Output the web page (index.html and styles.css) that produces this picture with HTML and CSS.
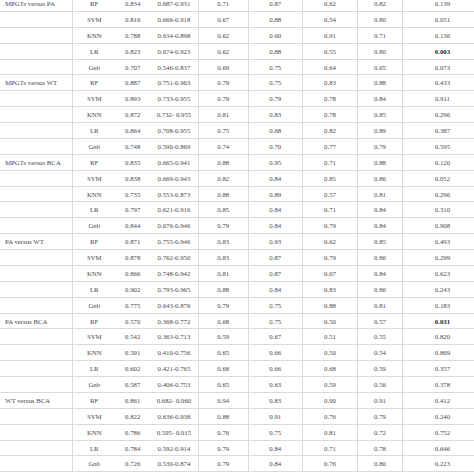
FILE: index.html
```html
<!DOCTYPE html>
<html>
<head>
<meta charset="utf-8">
<link rel="stylesheet" href="styles.css">
</head>
<body>
<div class="table">
  <div class="row"><div class="c g">MPGTs versus PA</div><div class="c m">RF</div><div class="c a">0.834</div><div class="c ci">0.687-0.931</div><div class="c v">0.71</div><div class="c v">0.87</div><div class="c v">0.62</div><div class="c v">0.82</div><div class="c p">0.139</div></div>
  <div class="row"><div class="c g"></div><div class="c m">SVM</div><div class="c a">0.816</div><div class="c ci">0.666-0.918</div><div class="c v">0.67</div><div class="c v">0.88</div><div class="c v">0.54</div><div class="c v">0.80</div><div class="c p">0.051</div></div>
  <div class="row"><div class="c g"></div><div class="c m">KNN</div><div class="c a">0.788</div><div class="c ci">0.634-0.898</div><div class="c v">0.62</div><div class="c v">0.60</div><div class="c v">0.91</div><div class="c v">0.71</div><div class="c p">0.136</div></div>
  <div class="row"><div class="c g"></div><div class="c m">LR</div><div class="c a">0.823</div><div class="c ci">0.674-0.923</div><div class="c v">0.62</div><div class="c v">0.88</div><div class="c v">0.55</div><div class="c v">0.80</div><div class="c p b">0.003</div></div>
  <div class="row"><div class="c g"></div><div class="c m">Gnb</div><div class="c a">0.707</div><div class="c ci">0.546-0.837</div><div class="c v">0.69</div><div class="c v">0.75</div><div class="c v">0.64</div><div class="c v">0.65</div><div class="c p">0.073</div></div>

  <div class="row"><div class="c g">MPGTs versus WT</div><div class="c m">RF</div><div class="c a">0.887</div><div class="c ci">0.751-0.963</div><div class="c v">0.79</div><div class="c v">0.75</div><div class="c v">0.83</div><div class="c v">0.88</div><div class="c p">0.433</div></div>
  <div class="row"><div class="c g"></div><div class="c m">SVM</div><div class="c a">0.893</div><div class="c ci">0.733-0.955</div><div class="c v">0.79</div><div class="c v">0.79</div><div class="c v">0.78</div><div class="c v">0.84</div><div class="c p">0.911</div></div>
  <div class="row"><div class="c g"></div><div class="c m">KNN</div><div class="c a">0.872</div><div class="c ci">0.732- 0.955</div><div class="c v">0.81</div><div class="c v">0.83</div><div class="c v">0.78</div><div class="c v">0.85</div><div class="c p">0.296</div></div>
  <div class="row"><div class="c g"></div><div class="c m">LR</div><div class="c a">0.864</div><div class="c ci">0.708-0.955</div><div class="c v">0.75</div><div class="c v">0.68</div><div class="c v">0.82</div><div class="c v">0.89</div><div class="c p">0.387</div></div>
  <div class="row"><div class="c g"></div><div class="c m">Gnb</div><div class="c a">0.748</div><div class="c ci">0.590-0.869</div><div class="c v">0.74</div><div class="c v">0.70</div><div class="c v">0.77</div><div class="c v">0.79</div><div class="c p">0.595</div></div>

  <div class="row"><div class="c g">MPGTs versus BCA</div><div class="c m">RF</div><div class="c a">0.835</div><div class="c ci">0.665-0.941</div><div class="c v">0.88</div><div class="c v">0.95</div><div class="c v">0.71</div><div class="c v">0.88</div><div class="c p">0.120</div></div>
  <div class="row"><div class="c g"></div><div class="c m">SVM</div><div class="c a">0.838</div><div class="c ci">0.669-0.943</div><div class="c v">0.82</div><div class="c v">0.84</div><div class="c v">0.85</div><div class="c v">0.86</div><div class="c p">0.052</div></div>
  <div class="row"><div class="c g"></div><div class="c m">KNN</div><div class="c a">0.735</div><div class="c ci">0.553-0.873</div><div class="c v">0.88</div><div class="c v">0.89</div><div class="c v">0.57</div><div class="c v">0.81</div><div class="c p">0.296</div></div>
  <div class="row"><div class="c g"></div><div class="c m">LR</div><div class="c a">0.797</div><div class="c ci">0.621-0.916</div><div class="c v">0.85</div><div class="c v">0.84</div><div class="c v">0.71</div><div class="c v">0.84</div><div class="c p">0.310</div></div>
  <div class="row"><div class="c g"></div><div class="c m">Gnb</div><div class="c a">0.844</div><div class="c ci">0.676-0.946</div><div class="c v">0.79</div><div class="c v">0.84</div><div class="c v">0.79</div><div class="c v">0.84</div><div class="c p">0.908</div></div>

  <div class="row"><div class="c g">PA versus WT</div><div class="c m">RF</div><div class="c a">0.871</div><div class="c ci">0.755-0.946</div><div class="c v">0.83</div><div class="c v">0.93</div><div class="c v">0.62</div><div class="c v">0.85</div><div class="c p">0.493</div></div>
  <div class="row"><div class="c g"></div><div class="c m">SVM</div><div class="c a">0.878</div><div class="c ci">0.762-0.950</div><div class="c v">0.83</div><div class="c v">0.87</div><div class="c v">0.79</div><div class="c v">0.86</div><div class="c p">0.299</div></div>
  <div class="row"><div class="c g"></div><div class="c m">KNN</div><div class="c a">0.866</div><div class="c ci">0.748-0.942</div><div class="c v">0.81</div><div class="c v">0.87</div><div class="c v">0.67</div><div class="c v">0.84</div><div class="c p">0.623</div></div>
  <div class="row"><div class="c g"></div><div class="c m">LR</div><div class="c a">0.902</div><div class="c ci">0.793-0.965</div><div class="c v">0.88</div><div class="c v">0.84</div><div class="c v">0.83</div><div class="c v">0.86</div><div class="c p">0.243</div></div>
  <div class="row"><div class="c g"></div><div class="c m">Gnb</div><div class="c a">0.775</div><div class="c ci">0.643-0.876</div><div class="c v">0.79</div><div class="c v">0.75</div><div class="c v">0.88</div><div class="c v">0.81</div><div class="c p">0.183</div></div>

  <div class="row"><div class="c g">PA versus BCA</div><div class="c m">RF</div><div class="c a">0.570</div><div class="c ci">0.368-0.772</div><div class="c v">0.68</div><div class="c v">0.75</div><div class="c v">0.50</div><div class="c v">0.57</div><div class="c p b">0.031</div></div>
  <div class="row"><div class="c g"></div><div class="c m">SVM</div><div class="c a">0.542</div><div class="c ci">0.363-0.713</div><div class="c v">0.59</div><div class="c v">0.67</div><div class="c v">0.51</div><div class="c v">0.55</div><div class="c p">0.820</div></div>
  <div class="row"><div class="c g"></div><div class="c m">KNN</div><div class="c a">0.591</div><div class="c ci">0.410-0.756</div><div class="c v">0.65</div><div class="c v">0.66</div><div class="c v">0.50</div><div class="c v">0.54</div><div class="c p">0.869</div></div>
  <div class="row"><div class="c g"></div><div class="c m">LR</div><div class="c a">0.602</div><div class="c ci">0.421-0.765</div><div class="c v">0.68</div><div class="c v">0.66</div><div class="c v">0.68</div><div class="c v">0.59</div><div class="c p">0.357</div></div>
  <div class="row"><div class="c g"></div><div class="c m">Gnb</div><div class="c a">0.587</div><div class="c ci">0.406-0.753</div><div class="c v">0.65</div><div class="c v">0.63</div><div class="c v">0.59</div><div class="c v">0.56</div><div class="c p">0.378</div></div>

  <div class="row"><div class="c g">WT versus BCA</div><div class="c m">RF</div><div class="c a">0.861</div><div class="c ci">0.682- 0.960</div><div class="c v">0.94</div><div class="c v">0.83</div><div class="c v">0.90</div><div class="c v">0.91</div><div class="c p">0.412</div></div>
  <div class="row"><div class="c g"></div><div class="c m">SVM</div><div class="c a">0.822</div><div class="c ci">0.636-0.938</div><div class="c v">0.88</div><div class="c v">0.91</div><div class="c v">0.76</div><div class="c v">0.79</div><div class="c p">0.240</div></div>
  <div class="row"><div class="c g"></div><div class="c m">KNN</div><div class="c a">0.786</div><div class="c ci">0.595- 0.915</div><div class="c v">0.76</div><div class="c v">0.75</div><div class="c v">0.81</div><div class="c v">0.72</div><div class="c p">0.752</div></div>
  <div class="row"><div class="c g"></div><div class="c m">LR</div><div class="c a">0.784</div><div class="c ci">0.592-0.914</div><div class="c v">0.79</div><div class="c v">0.84</div><div class="c v">0.71</div><div class="c v">0.78</div><div class="c p">0.646</div></div>
  <div class="row"><div class="c g"></div><div class="c m">Gnb</div><div class="c a">0.726</div><div class="c ci">0.530-0.874</div><div class="c v">0.79</div><div class="c v">0.84</div><div class="c v">0.76</div><div class="c v">0.80</div><div class="c p">0.223</div></div>
</div>
</body>
</html>
```
FILE: styles.css
```css
html, body {
  margin: 0;
  padding: 0;
  background: #ffffff;
  overflow: hidden;
}
.table {
  width: 482px;
  margin-top: -3.9px;
  font-family: "Liberation Serif", "Times New Roman", serif;
  font-size: 6.8px;
  color: #4a4a4a;
}
.row {
  display: grid;
  grid-template-columns: 72px 43.5px 34.5px 48px 49.5px 54.5px 55px 45px 80px;
  height: 15.89px;
  box-sizing: border-box;
  border-bottom: 1px solid #dadada;
}
.c {
  display: flex;
  align-items: center;
  justify-content: center;
  white-space: nowrap;
  box-sizing: border-box;
}
.g {
  justify-content: flex-start;
  padding-left: 5px;
}
.m, .v, .p {
  border-left: 1px solid #dadada;
}
.b {
  font-weight: bold;
  color: #222;
}
```
